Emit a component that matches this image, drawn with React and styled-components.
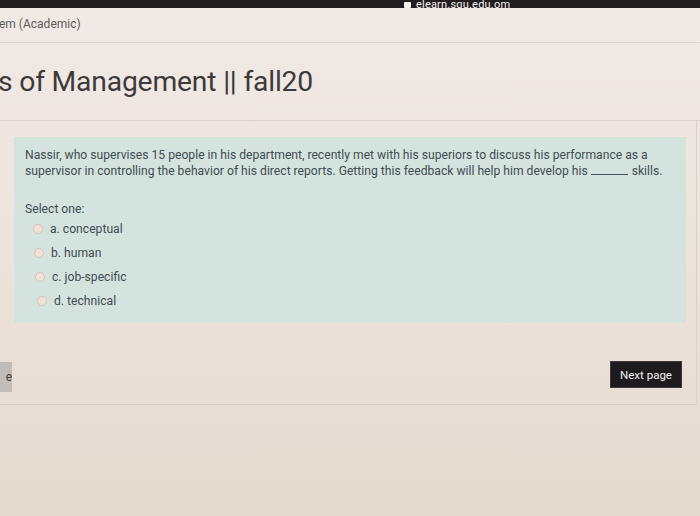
import React from "react";
import styled, { createGlobalStyle } from "styled-components";

const Global = createGlobalStyle`
  html, body { margin: 0; padding: 0; }
  body {
    width: 700px;
    height: 516px;
    overflow: hidden;
    background: linear-gradient(180deg, #f1e9e5 0%, #eee5df 40%, #e9ded5 75%, #e4d9cf 100%);
    font-family: Roboto, "Liberation Sans", Arial, sans-serif;
  }
`;

const Page = styled.div`
  display: flex;
  flex-direction: column;
  width: 700px;
  height: 516px;
  overflow: hidden;
`;

const TopBar = styled.div`
  height: 8px;
  background: #221e1f;
  overflow: hidden;
  display: flex;
  align-items: flex-end;
  padding-left: 404px;
  gap: 5px;
  color: #f4f0ee;
  font-size: 11px;
  line-height: 11px;
`;

const Lock = styled.span`
  width: 7px;
  height: 6px;
  background: #f4f0ee;
  border-radius: 1px;
`;

const Url = styled.span`
  margin-bottom: -2px;
  letter-spacing: 0.2px;
`;

const Nav = styled.div`
  height: 34px;
  display: flex;
  align-items: center;
  border-bottom: 1px solid #ddd3ce;
  font-size: 12px;
  color: #5e5b5a;
`;

const Crumb = styled.span`
  margin-left: -1px;
  margin-top: -2px;
`;

const Header = styled.div`
  height: 77px;
  display: flex;
  align-items: center;
  border-bottom: 1px solid #dcd3cd;
`;

const Title = styled.h1`
  margin: 0 0 0 -2px;
  font-size: 28.3px;
  font-weight: 400;
  color: #3c3a3a;
  letter-spacing: -0.2px;
`;

const Card = styled.div`
  border-right: 1px solid #d9d0ca;
  border-bottom: 1px solid #d6ccc5;
  width: 697px;
  height: 284px;
  padding: 16px 0 0 14px;
  box-sizing: border-box;
  display: flex;
  flex-direction: column;
`;

const QBox = styled.div`
  width: 672px;
  background: #d4e3de;
  padding: 10px 11px 10px 11px;
  box-sizing: border-box;
  color: #3f4d52;
  font-size: 12.15px;
  line-height: 16px;
`;

const QText = styled.p`
  margin: 0;
  white-space: nowrap;
`;

const Blank = styled.span`
  display: inline-block;
  width: 37px;
  border-bottom: 1px solid #4a5458;
  margin: 0 4px 0 3px;
  height: 11px;
  vertical-align: baseline;
`;

const Prompt = styled.div`
  margin-top: 22px;
  line-height: 16px;
`;

const Options = styled.div`
  display: flex;
  flex-direction: column;
`;

const Option = styled.label`
  height: 24px;
  display: flex;
  align-items: center;
  gap: 7px;
  padding-left: ${(p) => p.$indent}px;
`;

const Radio = styled.span`
  width: 10px;
  height: 10px;
  border-radius: 50%;
  background: #f1e2d8;
  border: 1px solid #d4c3b8;
  box-sizing: border-box;
`;

const Footer = styled.div`
  display: flex;
  justify-content: space-between;
  align-items: flex-start;
  margin-top: 38px;
  margin-left: -14px;
  padding-right: 14px;
`;

const PrevBtn = styled.div`
  width: 12px;
  height: 30px;
  background: #c2bcb8;
  color: #3a3a3a;
  font-size: 12px;
  display: flex;
  align-items: center;
  justify-content: flex-end;
  overflow: hidden;
  margin-top: 1px;
`;

const NextBtn = styled.button`
  width: 72px;
  height: 27px;
  background: #1d1b1e;
  color: #f2f0f0;
  border: 1px solid #3a3a3e;
  font-family: inherit;
  font-size: 11.5px;
  padding: 0;
`;

const options = [
  { label: "a. conceptual", indent: 8 },
  { label: "b. human", indent: 9 },
  { label: "c. job-specific", indent: 10 },
  { label: "d. technical", indent: 12 },
];

export default function App() {
  return (
    <Page>
      <Global />
      <TopBar>
        <Lock />
        <Url>elearn.squ.edu.om</Url>
      </TopBar>
      <Nav>
        <Crumb>em (Academic)</Crumb>
      </Nav>
      <Header>
        <Title>s of Management || fall20</Title>
      </Header>
      <Card>
        <QBox>
          <QText>
            Nassir, who supervises 15 people in his department, recently met with his superiors to discuss his performance as a
            <br />
            supervisor in controlling the behavior of his direct reports. Getting this feedback will help him develop his
            <Blank />skills.
          </QText>
          <Prompt>Select one:</Prompt>
          <Options>
            {options.map((o) => (
              <Option key={o.label} $indent={o.indent}>
                <Radio />
                <span>{o.label}</span>
              </Option>
            ))}
          </Options>
        </QBox>
        <Footer>
          <PrevBtn>e</PrevBtn>
          <NextBtn>Next page</NextBtn>
        </Footer>
      </Card>
    </Page>
  );
}
